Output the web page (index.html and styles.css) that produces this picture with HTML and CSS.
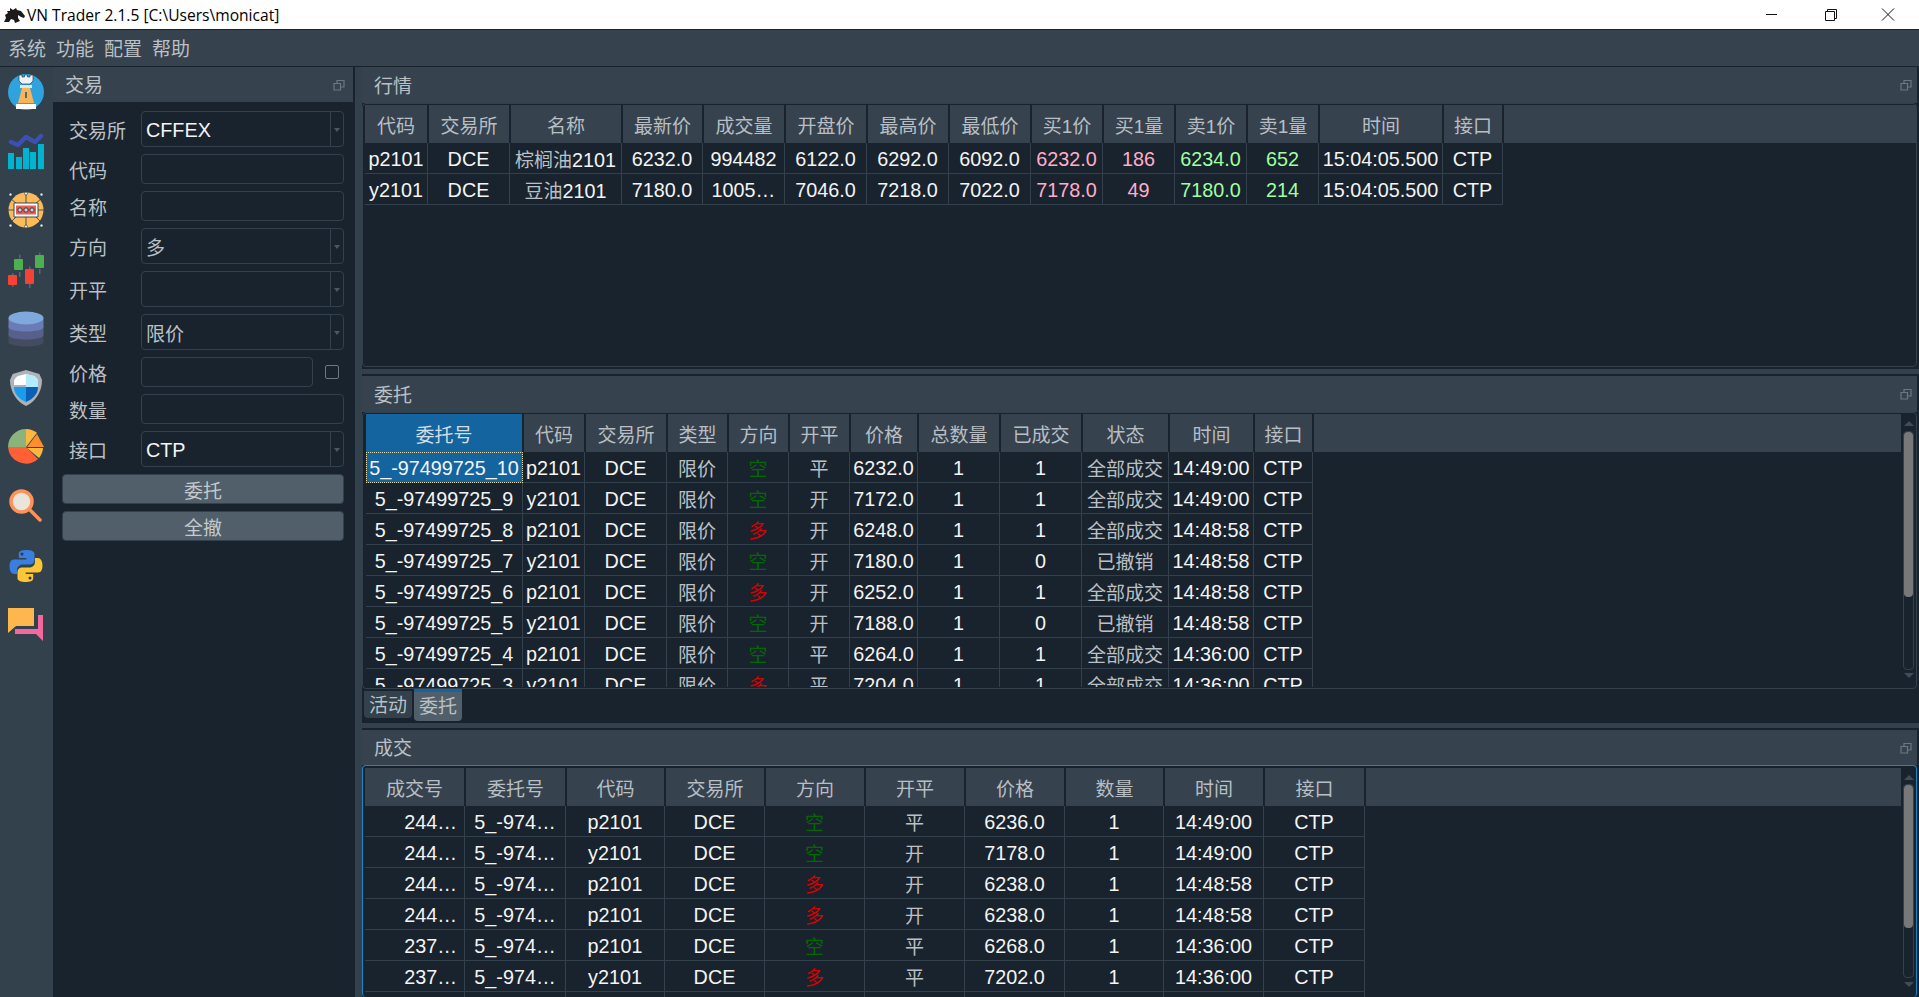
FILE: index.html
```html
<!DOCTYPE html>
<html lang="zh-CN">
<head>
<meta charset="utf-8">
<title>VN Trader 2.1.5</title>
<link rel="stylesheet" href="styles.css">
</head>
<body>
<div class="app">
  <header class="titlebar">
    <svg class="logo" viewBox="0 0 22 16"><path d="M1 15 3 11 2 8 5 6 4 4 7 4 7 1 10 3 13 1 14 3 18 4 22 9 21 11 18 10 15 8 15 11 17 14 12 16 11 13 8 12 6 15Z" fill="#1f1a1a"/></svg>
    <span class="apptitle">VN Trader 2.1.5 [C:\Users\monicat]</span>
    <div class="winbtns">
      <svg class="winbtn" viewBox="0 0 58 29"><path d="M24 14.5H35" stroke="#111" fill="none"/></svg>
      <svg class="winbtn" viewBox="0 0 58 29"><path d="M24.5 11.5h9v9h-9zM26.5 11.5v-2h9v9h-2" stroke="#111" fill="none"/></svg>
      <svg class="winbtn" viewBox="0 0 58 29"><path d="M23 8.5 35 20.5M35 8.5 23 20.5" stroke="#111" fill="none"/></svg>
    </div>
  </header>
  <nav class="menubar"><span>系统</span><span>功能</span><span>配置</span><span>帮助</span></nav>
  <div class="main">
    <aside class="toolbar">
      <svg class="tool" viewBox="0 0 36 36"><circle cx="18" cy="18" r="18" fill="#2ea3dd"/><path d="M11 1h3v2h2.500V1h3v2H22V1h3v6l-3 3H14l-3-3Z" fill="#eef2f4" stroke="#33404c" stroke-width=".7"/><path d="M12 11h12v3H12Z" fill="#dfe6ea"/><path d="M14 14h8l4 15H10Z" fill="#f7b55a"/><path d="M17 18h2v6h-2Z" fill="#5c6670"/><path d="M8 30h20v5H8Z" fill="#fff"/></svg>
      <svg class="tool" viewBox="0 0 36 36"><path d="M0 20h6v16H0ZM8 24h6v12H8ZM15 15h6v21h-6ZM22 19h6v17h-6ZM30 11h6v25h-6Z" fill="#00b4cf"/><path d="M3 9 10 12 18 4 27 9 33 3" fill="none" stroke="#3c4fb2" stroke-width="4.500" stroke-linecap="round" stroke-linejoin="round"/></svg>
      <svg class="tool" viewBox="0 0 36 36"><circle cx="18" cy="18" r="17.500" fill="#fbbb58"/><path d="M18 0V36M0 18H36M3 7 9 12V24L3 30M33 7 27 12V24L33 30" stroke="#29384a" stroke-width=".8" fill="none"/><path d="M6 11h24v14H6Z" fill="#fff" stroke="#3a4756"/><path d="M8 13.500h20v9H8Z" fill="#ef5b55"/><circle cx="12" cy="18" r="2.200" fill="#c9d0d8" stroke="#333"/><circle cx="18" cy="18" r="2.200" fill="#c9d0d8" stroke="#333"/><circle cx="24" cy="18" r="2.200" fill="#c9d0d8" stroke="#333"/><g fill="#e8edf2" stroke="#29384a" stroke-width=".6"><circle cx="2.500" cy="2.500" r="1.500"/><circle cx="18" cy="1.500" r="1.500"/><circle cx="33.500" cy="2.500" r="1.500"/><circle cx="2.500" cy="33.500" r="1.500"/><circle cx="18" cy="34.500" r="1.500"/><circle cx="33.500" cy="33.500" r="1.500"/></g></svg>
      <svg class="tool" viewBox="0 0 36 36"><path d="M11 2.500h1.500v4H11ZM31 .5h1.500v4H31ZM21 14.500h1.500v5H21ZM4 21h1.500v4H4Z" fill="#5a6670"/><path d="M11 20h1.500v5H11ZM31 17h1.500v5H31ZM21 32h1.500v4H21ZM4 31h1.500v4H4Z" fill="#5a6670"/><rect x="6.500" y="5" width="9" height="11" rx="1" fill="#4caf50" transform="translate(-.5 2)"/><rect x="27" y="3" width="9" height="13" rx="1" fill="#4caf50"/><rect x="17" y="17" width="9" height="15" rx="1" fill="#f44336"/><rect x="0" y="23" width="9" height="10" rx="1" fill="#f44336"/></svg>
      <svg class="tool" viewBox="0 0 36 36"><path d="M.5 24c0-3 35-3 35 0v7c0 6-35 6-35 0Z" fill="#434c60"/><path d="M.5 15c0-3 35-3 35 0v9c0 6-35 6-35 0Z" fill="#56608a"/><path d="M.5 7h35v9c0 6-35 6-35 0Z" fill="#6a7bb5"/><ellipse cx="18" cy="7" rx="17.500" ry="6.500" fill="#7fa9dc"/></svg>
      <svg class="tool" viewBox="0 0 36 36"><path d="M18 0 33 4 36 10C36 22 28 32 18 36 8 32 0 22 0 10L3 4Z" transform="translate(2 0) scale(.89 1)" fill="#adb3b8"/><path d="M6 11c0-1 2-4 4-5l8-2 8 2c2 1 4 4 4 5v4H6Z" fill="#fff"/><path d="M18 4l8 2c2 1 4 4 4 5v6H18Z" fill="#b5ecfb"/><path d="M6 17h12v15C11 29 6 24 6 17Z" fill="#1a9cec"/><path d="M18 17h12c0 7-5 12-12 15Z" fill="#0a60b3"/></svg>
      <svg class="tool" viewBox="0 0 36 36"><path d="M18 18V0A18 18 0 0 0 0 18Z" fill="#8bb47d"/><path d="M0 18H18L30 30A18 18 0 0 1 0 18Z" fill="#ff6035"/><path d="M18 0a18 18 0 0 1 11 3.800L18 18Z" fill="#fdb73f"/><path d="M29 5 36 18H19Z" fill="#fd8f2b"/><path d="M19 19H35A18 18 0 0 1 31 29Z" fill="#fdb73f"/></svg>
      <svg class="tool" viewBox="0 0 36 36"><path d="M20 20 32 32" stroke="#ff9257" stroke-width="3.500" stroke-linecap="round"/><circle cx="13.500" cy="13.500" r="10.500" fill="#e8e6dc" stroke="#ff9257" stroke-width="3.500"/></svg>
      <svg class="tool" viewBox="0 0 36 36"><path d="M17.800 2c-7 0-7 3-7 4v4h7.500v1.500H6C2.500 11.500 1.500 15 1.500 18.500s1.500 7.500 4.500 7.500h3v-4c0-3 2.500-5.500 5.500-5.500h7.500c2.500 0 4.500-2 4.500-4.500V6c0-2.500-3-4-8.700-4Z" fill="#3a7fe0"/><path d="M18.200 34c7 0 7-3 7-4v-4h-7.500v-1.500H30c3.500 0 4.500-3.500 4.500-7s-1.500-7.500-4.500-7.500h-3v4c0 3-2.500 5.500-5.500 5.500H14c-2.500 0-4.500 2-4.500 4.500V30c0 2.500 3 4 8.700 4Z" fill="#fcc737"/><circle cx="14" cy="6" r="1.500" fill="#2b3a4a"/><circle cx="22" cy="30" r="1.500" fill="#2b3a4a"/></svg>
      <svg class="tool" viewBox="0 0 36 36"><path d="M35 8V34L28 27H7V22H30V8Z" fill="#f5689f"/><path d="M0 1H26V19H8L0 26Z" fill="#feb74f"/></svg>
    </aside>

    <section class="leftdock">
      <div class="docktitle shorter"><span class="titletext">交易</span><svg class="floaticon" viewBox="0 0 12 12"><path d="M1 4.500h6.500v6.500H1ZM4 4V1.500h7V8H8" fill="none" stroke="#6b7782" stroke-width="1.200"/></svg></div>
      <form class="tradeform">
        <div class="formrow"><label>交易所</label><div class="combo"><span class="val latin">CFFEX</span><i class="drop"></i></div></div>
        <div class="formrow"><label>代码</label><div class="input"></div></div>
        <div class="formrow"><label>名称</label><div class="input"></div></div>
        <div class="formrow"><label>方向</label><div class="combo"><span class="val">多</span><i class="drop"></i></div></div>
        <div class="formrow"><label>开平</label><div class="combo"><span class="val"></span><i class="drop"></i></div></div>
        <div class="formrow"><label>类型</label><div class="combo"><span class="val">限价</span><i class="drop"></i></div></div>
        <div class="formrow"><label>价格</label><div class="input price"></div><div class="check"></div></div>
        <div class="formrow"><label>数量</label><div class="input"></div></div>
        <div class="formrow"><label>接口</label><div class="combo"><span class="val latin">CTP</span><i class="drop"></i></div></div>
        <button type="button" class="btn">委托</button>
        <button type="button" class="btn">全撤</button>
      </form>
    </section>

    <div class="vsplit"></div>

    <div class="right">
      <section class="dock quotes">
        <div class="docktitle"><span class="titletext">行情</span><svg class="floaticon" viewBox="0 0 12 12"><path d="M1 4.500h6.500v6.500H1ZM4 4V1.500h7V8H8" fill="none" stroke="#6b7782" stroke-width="1.200"/></svg></div>
        <div class="frame">
          <div class="tablewrap">
            <table class="grid t-quote">
              <colgroup><col><col><col><col><col><col><col><col><col><col><col><col><col><col><col></colgroup>
              <thead><tr><th>代码</th><th>交易所</th><th>名称</th><th>最新价</th><th>成交量</th><th>开盘价</th><th>最高价</th><th>最低价</th><th>买1价</th><th>买1量</th><th>卖1价</th><th>卖1量</th><th>时间</th><th>接口</th><th class="fill"></th></tr></thead>
              <tbody>
                <tr><td>p2101</td><td>DCE</td><td class="mixed"><span class="cjk">棕榈油</span>2101</td><td>6232.0</td><td>994482</td><td>6122.0</td><td>6292.0</td><td>6092.0</td><td class="bid">6232.0</td><td class="bid">186</td><td class="ask">6234.0</td><td class="ask">652</td><td>15:04:05.500</td><td>CTP</td></tr>
                <tr><td>y2101</td><td>DCE</td><td class="mixed"><span class="cjk">豆油</span>2101</td><td>7180.0</td><td>1005…</td><td>7046.0</td><td>7218.0</td><td>7022.0</td><td class="bid">7178.0</td><td class="bid">49</td><td class="ask">7180.0</td><td class="ask">214</td><td>15:04:05.500</td><td>CTP</td></tr>
              </tbody>
            </table>
          </div>
        </div>
      </section>

      <div class="hsplit"></div>

      <section class="dock orders">
        <div class="docktitle"><span class="titletext">委托</span><svg class="floaticon" viewBox="0 0 12 12"><path d="M1 4.500h6.500v6.500H1ZM4 4V1.500h7V8H8" fill="none" stroke="#6b7782" stroke-width="1.200"/></svg></div>
        <div class="frame clipbottom">
          <div class="tablewrap inset">
            <table class="grid t-order">
              <colgroup><col><col><col><col><col><col><col><col><col><col><col><col><col></colgroup>
              <thead><tr><th class="selhead">委托号</th><th>代码</th><th>交易所</th><th>类型</th><th>方向</th><th>开平</th><th>价格</th><th>总数量</th><th>已成交</th><th>状态</th><th>时间</th><th>接口</th><th class="fill"></th></tr></thead>
              <tbody>
                <tr><td class="selcell">5_-97499725_10</td><td>p2101</td><td>DCE</td><td class="cjk">限价</td><td class="short">空</td><td class="cjk">平</td><td>6232.0</td><td>1</td><td>1</td><td class="cjk">全部成交</td><td>14:49:00</td><td>CTP</td></tr>
                <tr><td>5_-97499725_9</td><td>y2101</td><td>DCE</td><td class="cjk">限价</td><td class="short">空</td><td class="cjk">开</td><td>7172.0</td><td>1</td><td>1</td><td class="cjk">全部成交</td><td>14:49:00</td><td>CTP</td></tr>
                <tr><td>5_-97499725_8</td><td>p2101</td><td>DCE</td><td class="cjk">限价</td><td class="long">多</td><td class="cjk">开</td><td>6248.0</td><td>1</td><td>1</td><td class="cjk">全部成交</td><td>14:48:58</td><td>CTP</td></tr>
                <tr><td>5_-97499725_7</td><td>y2101</td><td>DCE</td><td class="cjk">限价</td><td class="short">空</td><td class="cjk">开</td><td>7180.0</td><td>1</td><td>0</td><td class="cjk">已撤销</td><td>14:48:58</td><td>CTP</td></tr>
                <tr><td>5_-97499725_6</td><td>p2101</td><td>DCE</td><td class="cjk">限价</td><td class="long">多</td><td class="cjk">开</td><td>6252.0</td><td>1</td><td>1</td><td class="cjk">全部成交</td><td>14:48:58</td><td>CTP</td></tr>
                <tr><td>5_-97499725_5</td><td>y2101</td><td>DCE</td><td class="cjk">限价</td><td class="short">空</td><td class="cjk">开</td><td>7188.0</td><td>1</td><td>0</td><td class="cjk">已撤销</td><td>14:48:58</td><td>CTP</td></tr>
                <tr><td>5_-97499725_4</td><td>p2101</td><td>DCE</td><td class="cjk">限价</td><td class="short">空</td><td class="cjk">平</td><td>6264.0</td><td>1</td><td>1</td><td class="cjk">全部成交</td><td>14:36:00</td><td>CTP</td></tr>
                <tr><td>5_-97499725_3</td><td>y2101</td><td>DCE</td><td class="cjk">限价</td><td class="long">多</td><td class="cjk">平</td><td>7204.0</td><td>1</td><td>1</td><td class="cjk">全部成交</td><td>14:36:00</td><td>CTP</td></tr>
              </tbody>
            </table>
          </div>
          <div class="vscroll order-scroll"><i class="arrow up"></i><div class="track"><div class="thumb"></div></div><i class="arrow down"></i></div>
        </div>
        <div class="tabs"><span class="tab">活动</span><span class="tab active">委托</span></div>
      </section>

      <div class="hsplit second"></div>

      <section class="dock trades">
        <div class="docktitle low"><span class="titletext">成交</span><svg class="floaticon" viewBox="0 0 12 12"><path d="M1 4.500h6.500v6.500H1ZM4 4V1.500h7V8H8" fill="none" stroke="#6b7782" stroke-width="1.200"/></svg></div>
        <div class="frame focus">
          <div class="tablewrap">
            <table class="grid t-trade">
              <colgroup><col><col><col><col><col><col><col><col><col><col><col></colgroup>
              <thead><tr><th>成交号</th><th>委托号</th><th>代码</th><th>交易所</th><th>方向</th><th>开平</th><th>价格</th><th>数量</th><th>时间</th><th>接口</th><th class="fill"></th></tr></thead>
              <tbody>
                <tr><td class="rt">244…</td><td>5_-974…</td><td>p2101</td><td>DCE</td><td class="short">空</td><td class="cjk">平</td><td>6236.0</td><td>1</td><td>14:49:00</td><td>CTP</td></tr>
                <tr><td class="rt">244…</td><td>5_-974…</td><td>y2101</td><td>DCE</td><td class="short">空</td><td class="cjk">开</td><td>7178.0</td><td>1</td><td>14:49:00</td><td>CTP</td></tr>
                <tr><td class="rt">244…</td><td>5_-974…</td><td>p2101</td><td>DCE</td><td class="long">多</td><td class="cjk">开</td><td>6238.0</td><td>1</td><td>14:48:58</td><td>CTP</td></tr>
                <tr><td class="rt">244…</td><td>5_-974…</td><td>p2101</td><td>DCE</td><td class="long">多</td><td class="cjk">开</td><td>6238.0</td><td>1</td><td>14:48:58</td><td>CTP</td></tr>
                <tr><td class="rt">237…</td><td>5_-974…</td><td>p2101</td><td>DCE</td><td class="short">空</td><td class="cjk">平</td><td>6268.0</td><td>1</td><td>14:36:00</td><td>CTP</td></tr>
                <tr><td class="rt">237…</td><td>5_-974…</td><td>y2101</td><td>DCE</td><td class="long">多</td><td class="cjk">平</td><td>7202.0</td><td>1</td><td>14:36:00</td><td>CTP</td></tr>
                <tr><td></td><td></td><td></td><td></td><td></td><td></td><td></td><td></td><td></td><td></td></tr>
              </tbody>
            </table>
          </div>
          <div class="vscroll trade-scroll"><i class="arrow up"></i><div class="track"><div class="thumb"></div></div><i class="arrow down"></i></div>
        </div>
      </section>
    </div>
  </div>
</div>
</body>
</html>
```

FILE: styles.css
```css
* { box-sizing: border-box; }
html, body { margin: 0; height: 100%; overflow: hidden; }
body {
  font-family: "Liberation Sans", "Noto Sans CJK SC", sans-serif;
  font-size: 19.8px;
  color: #f0f0f0;
  background: #19232d;
}
.app { display: flex; flex-direction: column; width: 1919px; height: 997px; }

/* title bar */
.titlebar {
  height: 29px; flex: none; background: #fff; color: #000;
  display: flex; align-items: center; padding-left: 3px;
}
.logo { width: 22px; height: 16px; margin-right: 2px; }
.apptitle { font-family: "Open Sans", sans-serif; font-size: 15.6px; }
.winbtns { margin-left: auto; display: flex; padding-right: 2px; }
.winbtn { width: 58px; height: 29px; display: block; }
.winbtns .winbtn:first-child { margin-right: 1px; }

/* menu */
.menubar {
  height: 38px; flex: none; background: #36434f;
  border-top: 1px solid #19232d; border-bottom: 1px solid #19232d;
  display: flex; align-items: center; gap: 10px; padding: 0 0 2px 8px;
  color: #bac0c5; font-size: 19px;
}

.main { flex: 1; display: flex; min-height: 0; }

/* tool bar */
.toolbar {
  width: 53px; flex: none; background: #32414b;
  display: flex; flex-direction: column; align-items: center;
  gap: 23.2px; padding: 7px 0 0 0;
}
.tool { width: 36px; height: 36px; flex: none; margin-left: -1px; }

/* left dock */
.leftdock { width: 302px; flex: none; background: #19232d; display: flex; flex-direction: column; }
.docktitle {
  height: 36px; flex: none; background: #36434f;
  display: flex; align-items: center; padding: 0 5px 0 12px;
  color: #bac0c5; font-size: 19px;
}
.docktitle.shorter { height: 35px; margin-right: 2px; padding-right: 8px; }
.docktitle.low { height: 35px; }
.titletext { flex: 1; padding-bottom: 2px; }
.floaticon { width: 12px; height: 12px; }

.tradeform { display: flex; flex-direction: column; gap: 7px; padding: 9px 11px 0 9px; }
.formrow { display: flex; align-items: center; padding-left: 7px; }
.formrow label { width: 72px; flex: none; color: #bac0c5; font-size: 19px; }
.combo, .input { border: 1px solid #32414b; border-radius: 4px; background: #19232d; flex: 1; }
.combo { height: 36px; display: flex; align-items: center; }
.input { height: 30px; }
.input.price { flex: none; width: 172px; margin-right: 12px; }
.val { flex: 1; padding-left: 4px; color: #bac0c5; font-size: 19px; }
.val.latin { color: #f4f4f4; font-size: 19.8px; padding-top: 2px; }
.drop {
  width: 13px; height: 100%; border-left: 1px solid #32414b; position: relative;
}
.drop::after {
  content: ""; position: absolute; left: 3px; top: 16px;
  border-left: 3.5px solid transparent; border-right: 3.5px solid transparent;
  border-top: 4px solid #4b5862;
}
.check { width: 14px; height: 14px; border: 1px solid #6c7780; border-radius: 2px; margin-right: 4px; flex: none; }
.btn {
  height: 30px; border: 1px solid #32414b; border-radius: 4px; background: #505f69;
  color: #c3c9cd; font: inherit; font-size: 19px; padding: 0;
}

/* splitters */
.vsplit { width: 7px; flex: none; background: #32414b; }
.right { flex: 1; min-width: 0; display: flex; flex-direction: column; padding-right: 2px; }
.hsplit { height: 5px; flex: none; background: #32414b; margin: 2px -2px 2px 0; }

/* docks */
.dock { display: flex; flex-direction: column; min-height: 0; }
.quotes { height: 300px; flex: none; }
.orders { height: 345px; flex: none; }
.trades { flex: 1; }

.frame {
  flex: 1; min-height: 0; display: flex;
  border: 1px solid #32414b; border-radius: 4px;
  padding: 1px 0 0 2px;
  background: #19232d;
}
.frame.clipbottom { padding-bottom: 1px; }
.frame.focus { border-color: #1d86c9; padding-top: 2px; border-bottom: 0; }
.tablewrap { flex: 1; min-width: 0; overflow: hidden; }
.tablewrap.inset { margin-left: 1px; }

/* tables */
.grid { border-collapse: separate; border-spacing: 0; table-layout: fixed; width: 100%; }
.grid th {
  height: 38px; padding: 0; background: #36434f; color: #b8bec3; font-weight: 400; font-size: 19px;
  border-left: 1px solid #19232d; border-right: 1px solid #19232d; white-space: nowrap;
}
.grid th:first-child { border-left: 0; }
.grid th.fill { border-right: 0; }
.grid td {
  height: 31px; padding: 2px 0 0; text-align: center; white-space: nowrap; overflow: hidden;
  border-right: 1px solid #32414b; border-bottom: 1px solid #32414b;
  color: #f4f4f4;
}
.grid td.cjk, .grid td.mixed { padding-top: 0; }
.grid td.cjk, .grid .cjk { color: #bac0c5; font-size: 19px; }
.grid td.rt { text-align: right; padding-right: 7px; }
.grid td.bid { color: #ffaec9; }
.grid td.ask { color: #a0ffa0; }
.grid td.short { color: #006a00; font-size: 19px; padding-top: 0; }
.grid td.long { color: #d80000; font-size: 19px; padding-top: 0; }
.grid th.selhead { background: #1464a0; color: #d5dde3; }
.grid td.selcell { background: #1464a0; outline: 1px dotted #e6d9a8; outline-offset: -1px; }

.t-quote col:nth-child(1) { width: 63px; }
.t-quote col:nth-child(2) { width: 82px; }
.t-quote col:nth-child(3) { width: 112px; }
.t-quote col:nth-child(4) { width: 81px; }
.t-quote col:nth-child(5) { width: 82px; }
.t-quote col:nth-child(6) { width: 82px; }
.t-quote col:nth-child(7) { width: 82px; }
.t-quote col:nth-child(8) { width: 82px; }
.t-quote col:nth-child(9) { width: 72px; }
.t-quote col:nth-child(10) { width: 72px; }
.t-quote col:nth-child(11) { width: 72px; }
.t-quote col:nth-child(12) { width: 72px; }
.t-quote col:nth-child(13) { width: 124px; }
.t-quote col:nth-child(14) { width: 60px; }

.t-order col:nth-child(1) { width: 157px; }
.t-order col:nth-child(2) { width: 62px; }
.t-order col:nth-child(3) { width: 82px; }
.t-order col:nth-child(4) { width: 61px; }
.t-order col:nth-child(5) { width: 61px; }
.t-order col:nth-child(6) { width: 61px; }
.t-order col:nth-child(7) { width: 68px; }
.t-order col:nth-child(8) { width: 82px; }
.t-order col:nth-child(9) { width: 82px; }
.t-order col:nth-child(10) { width: 87px; }
.t-order col:nth-child(11) { width: 85px; }
.t-order col:nth-child(12) { width: 59px; }

.t-trade col:nth-child(1) { width: 100px; }
.t-trade col:nth-child(2) { width: 101px; }
.t-trade col:nth-child(3) { width: 99px; }
.t-trade col:nth-child(4) { width: 100px; }
.t-trade col:nth-child(5) { width: 100px; }
.t-trade col:nth-child(6) { width: 100px; }
.t-trade col:nth-child(7) { width: 100px; }
.t-trade col:nth-child(8) { width: 99px; }
.t-trade col:nth-child(9) { width: 100px; }
.t-trade col:nth-child(10) { width: 101px; }

/* scroll bars */
.vscroll { width: 15px; flex: none; display: flex; flex-direction: column; align-items: flex-end; padding: 7px 2px 0 0; }
.track { width: 11px; flex: none; border: 1px solid #32414b; border-radius: 4px; }
.thumb { width: 100%; background: #787878; border-radius: 4px; }
.arrow { width: 0; height: 0; flex: none; border-left: 5px solid transparent; border-right: 5px solid transparent; }
.arrow.up { border-bottom: 5px solid #3e4d58; }
.arrow.down { border-top: 5px solid #3e4d58; }
.order-scroll .arrow.up { margin-bottom: 5px; }
.order-scroll .track { height: 239px; }
.order-scroll .thumb { height: 165px; }
.order-scroll .arrow.down { margin-top: 3px; }
.trade-scroll .arrow.up { margin-bottom: 4px; }
.trade-scroll .track { height: 194px; }
.trade-scroll .thumb { height: 143px; }
.trade-scroll .arrow.down { margin-top: 4px; }

/* tabs */
.tabs { height: 32px; flex: none; display: flex; gap: 2px; padding-left: 2px; align-items: flex-start; }
.tab {
  width: 48px; height: 27px; margin-top: 2px; background: #32414b; color: #bac0c5; font-size: 19px;
  text-align: center; line-height: 29px; border-radius: 0 0 4px 4px;
}
.tab.active {
  height: 32px; margin-top: 0; background: #505f69; border-top: 3px solid #1464a0; line-height: 30px;
}
```
